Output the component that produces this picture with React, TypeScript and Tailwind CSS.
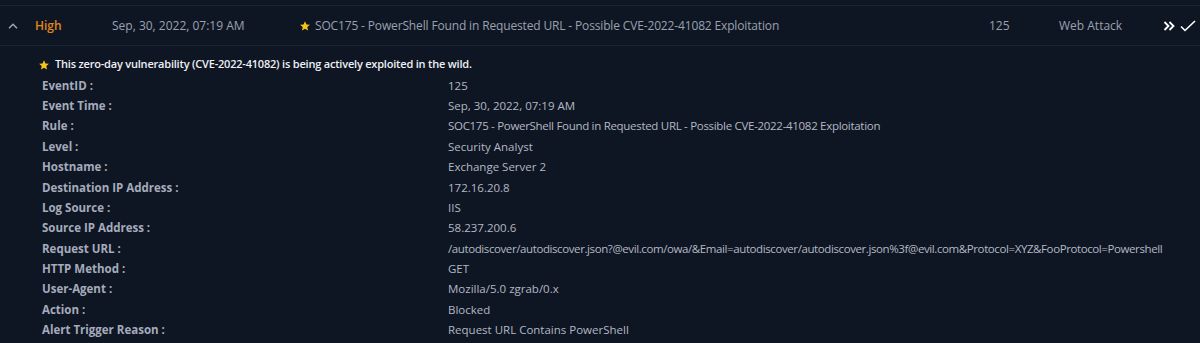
import React from 'react';

const rows: [string, string, string][] = [
  ['EventID :', '125', ''],
  ['Event Time :', 'Sep, 30, 2022, 07:19 AM', ''],
  ['Rule :', 'SOC175 - PowerShell Found in Requested URL - Possible CVE-2022-41082 Exploitation', 'tracking-[-0.3px]'],
  ['Level :', 'Security Analyst', ''],
  ['Hostname :', 'Exchange Server 2', ''],
  ['Destination IP Address :', '172.16.20.8', ''],
  ['Log Source :', 'IIS', ''],
  ['Source IP Address :', '58.237.200.6', ''],
  ['Request URL :', '/autodiscover/autodiscover.json?@evil.com/owa/&Email=autodiscover/autodiscover.json%3f@evil.com&Protocol=XYZ&FooProtocol=Powershell', 'tracking-[-0.4px]'],
  ['HTTP Method :', 'GET', ''],
  ['User-Agent :', 'Mozilla/5.0 zgrab/0.x', ''],
  ['Action :', 'Blocked', ''],
  ['Alert Trigger Reason :', 'Request URL Contains PowerShell', ''],
];

const Star = ({ className }: { className?: string }) => (
  <svg viewBox="0 0 24 24" className={className} fill="#f5c518">
    <path d="M12 2.5l2.9 6.3 6.9.7-5.2 4.6 1.5 6.8L12 17.4l-6.1 3.5 1.5-6.8-5.2-4.6 6.9-.7z" />
  </svg>
);

const App: React.FC = () => {
  return (
    <div
      className="w-[1200px] h-[343px] overflow-hidden bg-[#0f1623] pt-[5px]"
      style={{ fontFamily: '"Open Sans", "Noto Sans", sans-serif' }}
    >
      {/* Alert row */}
      <div className="flex items-center h-[41px] border-y border-[#1b2434] text-[12px] text-[#9aa1b0]">
        <div className="w-[35px] pl-[8px] flex items-center">
          <svg viewBox="0 0 10 6" className="w-[10px] h-[6px]" fill="none" stroke="#a3aab8" strokeWidth="1.4">
            <path d="M1 5.2L5 1.2l4 4" />
          </svg>
        </div>
        <div className="w-[77px] text-[#e0861a] font-semibold">High</div>
        <div className="w-[187px]">Sep, 30, 2022, 07:19 AM</div>
        <div className="w-[690px] flex items-center gap-[4px]">
          <Star className="w-[12px] h-[12px]" />
          <span className="tracking-[-0.15px]">SOC175 - PowerShell Found in Requested URL - Possible CVE-2022-41082 Exploitation</span>
        </div>
        <div className="w-[70px]">125</div>
        <div className="w-[104px]">Web Attack</div>
        <div className="flex items-center gap-[5px] text-white">
          <svg viewBox="0 0 12 12" className="w-[12px] h-[12px]" fill="none" stroke="#ffffff" strokeWidth="1.8">
            <path d="M1.5 2l4 4-4 4M6.5 2l4 4-4 4" />
          </svg>
          <svg viewBox="0 0 16 12" className="w-[16px] h-[12px]" fill="none" stroke="#ffffff" strokeWidth="1.6">
            <path d="M1 6.5l4 4L15 1" />
          </svg>
        </div>
      </div>

      {/* Details */}
      <div className="pl-[38px] pt-[10px]">
        <div className="flex items-center gap-[5px] h-[17px] text-[11px] text-[#eef0f4] font-semibold tracking-[-0.2px]">
          <Star className="w-[12px] h-[12px]" />
          <span>This zero-day vulnerability (CVE-2022-41082) is being actively exploited in the wild.</span>
        </div>
        <div className="mt-[2px] pl-[4px]">
          {rows.map(([label, value, extra]) => (
            <div key={label} className="grid grid-cols-[406px_1fr] h-[20.4px] items-center text-[11.5px]">
              <div className="font-bold text-[#a5abbc]">{label}</div>
              <div className={`text-[#b3b8c3] whitespace-nowrap ${extra}`}>{value}</div>
            </div>
          ))}
        </div>
      </div>
    </div>
  );
};

export default App;
